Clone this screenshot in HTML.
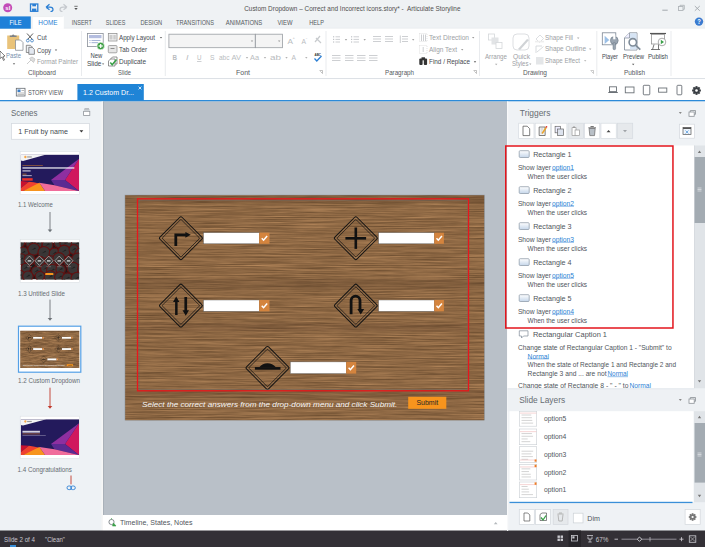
<!DOCTYPE html>
<html><head><meta charset="utf-8"><style>
html,body{margin:0;padding:0;width:705px;height:547px;overflow:hidden;background:#fff}
svg{display:block}
text{font-family:"Liberation Sans",sans-serif;white-space:pre}
</style></head><body>
<svg width="705" height="547" viewBox="0 0 705 547">
<rect x="0" y="0" width="705" height="29" fill="#eff2f4" />
<line x1="0" y1="28.4" x2="705" y2="28.4" stroke="#e0e4e7" stroke-width="0.8" />
<rect x="0" y="28.5" width="705" height="50" fill="#ffffff" />
<line x1="0" y1="78.6" x2="705" y2="78.6" stroke="#dde1e6" stroke-width="1.1" />
<rect x="0" y="79.2" width="705" height="21" fill="#ffffff" />
<rect x="0" y="100" width="705" height="1.6" fill="#2b8ad8" />
<rect x="0" y="101.5" width="103" height="430" fill="#eef2f5" />
<rect x="101.5" y="101.5" width="1.5" height="430" fill="#f6f6f6" />
<rect x="103" y="101.5" width="404" height="414" fill="#b9c0c8" />
<rect x="103" y="101.5" width="1" height="414" fill="#a9b1b9" />
<rect x="103" y="515" width="404" height="16" fill="#ffffff" />
<rect x="507" y="101.5" width="198" height="430" fill="#eff2f5" />
<rect x="0" y="530.5" width="705" height="16.5" fill="#333036" />
<circle cx="7.7" cy="7.7" r="4.5" fill="#c24cb8"/>
<text x="5.3" y="9.7" font-size="5" fill="#ffffff" textLength="5.0" lengthAdjust="spacingAndGlyphs" font-weight="bold">sl</text>
<rect x="30.5" y="4" width="7.3" height="7.3" fill="none" stroke="#2b7fd4" stroke-width="1.3"/>
<rect x="32.3" y="4" width="3.7" height="2.3" fill="#2b7fd4" />
<rect x="32" y="8.6" width="4.3" height="2.7" fill="#2b7fd4" />
<path d="M46 7.2 L49.5 4.2 M46 7.2 L49.5 9.8 M46.5 7.2 H50 Q53 7.2 53 9.5 Q53 11.5 50.5 11.5" fill="none" stroke="#2b7fd4" stroke-width="1.2"/>
<path d="M67 7.2 L63.5 4.2 M67 7.2 L63.5 9.8 M66.5 7.2 H63 Q60 7.2 60 9.5 Q60 11.5 62.5 11.5" fill="none" stroke="#c5c9ce" stroke-width="1.2"/>
<line x1="74.3" y1="6.3" x2="77.7" y2="6.3" stroke="#555" stroke-width="0.8" />
<path d="M74.3 8 L77.7 8 L76 10 Z" fill="#555"/>
<text x="244.2" y="10.6" font-size="7.2" fill="#505050" textLength="216.3" lengthAdjust="spacingAndGlyphs" >Custom Dropdown – Correct and Incorrect icons.story* -  Articulate Storyline</text>
<line x1="662.3" y1="10.2" x2="667.7" y2="10.2" stroke="#9aa0a5" stroke-width="0.9" />
<rect x="678.5" y="6.5" width="4.5" height="4" fill="none" stroke="#b0b5ba" stroke-width="0.9"/>
<path d="M680 6.5 V5.3 H684.3 V9.3 H683" fill="none" stroke="#b0b5ba" stroke-width="0.9"/>
<path d="M694.8 6 L699.8 10.8 M699.8 6 L694.8 10.8" stroke="#a3a8ad" stroke-width="0.9"/>
<circle cx="699" cy="21.6" r="4.2" fill="#3a7bd0"/>
<text x="697.2" y="24.1" font-size="6.5" fill="#ffffff" textLength="3.6" lengthAdjust="spacingAndGlyphs" font-weight="bold">?</text>
<rect x="0" y="16.4" width="30.8" height="12.3" fill="#1f80d8" />
<text x="9.5" y="24.9" font-size="6.3" fill="#ffffff" textLength="12.0" lengthAdjust="spacingAndGlyphs" >FILE</text>
<rect x="32.8" y="16.4" width="31" height="12.5" fill="#ffffff" />
<line x1="32.8" y1="16.6" x2="62.8" y2="16.6" stroke="#e3e6ea" stroke-width="0.6" />
<text x="38.3" y="24.9" font-size="6.3" fill="#2b7fd4" textLength="19.2" lengthAdjust="spacingAndGlyphs" >HOME</text>
<text x="71.7" y="25.0" font-size="6.3" fill="#555a60" textLength="20.2" lengthAdjust="spacingAndGlyphs" >INSERT</text>
<text x="105.8" y="25.0" font-size="6.3" fill="#555a60" textLength="19.5" lengthAdjust="spacingAndGlyphs" >SLIDES</text>
<text x="140.4" y="25.0" font-size="6.3" fill="#555a60" textLength="21.8" lengthAdjust="spacingAndGlyphs" >DESIGN</text>
<text x="176.1" y="25.0" font-size="6.3" fill="#555a60" textLength="37.8" lengthAdjust="spacingAndGlyphs" >TRANSITIONS</text>
<text x="225.8" y="25.0" font-size="6.3" fill="#555a60" textLength="36.5" lengthAdjust="spacingAndGlyphs" >ANIMATIONS</text>
<text x="277.4" y="25.0" font-size="6.3" fill="#555a60" textLength="15.1" lengthAdjust="spacingAndGlyphs" >VIEW</text>
<text x="309.2" y="25.0" font-size="6.3" fill="#555a60" textLength="14.7" lengthAdjust="spacingAndGlyphs" >HELP</text>
<line x1="81.5" y1="31" x2="81.5" y2="76" stroke="#e3e6ea" stroke-width="0.8" />
<line x1="165.3" y1="31" x2="165.3" y2="76" stroke="#e3e6ea" stroke-width="0.8" />
<line x1="326" y1="31" x2="326" y2="76" stroke="#e3e6ea" stroke-width="0.8" />
<line x1="479.5" y1="31" x2="479.5" y2="76" stroke="#e3e6ea" stroke-width="0.8" />
<line x1="596.8" y1="31" x2="596.8" y2="76" stroke="#e3e6ea" stroke-width="0.8" />
<line x1="671" y1="31" x2="671" y2="76" stroke="#e3e6ea" stroke-width="0.8" />
<rect x="7.2" y="35.5" width="12" height="13.5" fill="#e9c37a" />
<path d="M9.8 37 V35.6 H11.8 Q13.2 33.2 14.6 35.6 H16.6 V37 Z" fill="#7d8288"/>
<path d="M15.5 40 H20.5 L23 42.5 V50.3 H15.5 Z" fill="#fff" stroke="#8a8f95" stroke-width="0.8"/>
<text x="6" y="58.4" font-size="7.2" fill="#7590ad" textLength="15.0" lengthAdjust="spacingAndGlyphs" >Paste</text>
<path d="M12.8 63.2 L15.2 63.2 L14 64.7 Z" fill="#666"/>
<path d="M0 51 L5 56 L3 56.5 L4.5 60 L3.5 60.5 L2 57 L0 58.5 Z" fill="#fff" stroke="#333" stroke-width="0.6"/>
<path d="M27 33.5 L32.5 39.5 M33 33.5 L27.5 39.5" stroke="#333" stroke-width="0.8"/>
<circle cx="27.8" cy="40.6" r="1.4" fill="none" stroke="#3b7fc4" stroke-width="0.8"/><circle cx="32" cy="40.6" r="1.4" fill="none" stroke="#3b7fc4" stroke-width="0.8"/>
<text x="37" y="40.4" font-size="7.3" fill="#444a50" textLength="9.6" lengthAdjust="spacingAndGlyphs" >Cut</text>
<path d="M26.3 45.3 H30.5 L32 46.8 V52.5 H26.3 Z" fill="#eef1f5" stroke="#666" stroke-width="0.7"/>
<path d="M28.8 47.3 H32.3 L34.4 49.4 V54.3 H28.8 Z" fill="#e3e8f0" stroke="#666" stroke-width="0.7"/>
<text x="37" y="52.8" font-size="7.3" fill="#444a50" textLength="14.0" lengthAdjust="spacingAndGlyphs" >Copy</text>
<path d="M54.8 49.6 L57.2 49.6 L56 51 Z" fill="#666"/>
<path d="M27 64 L31 60 M29.5 58.5 L33.5 62.5 L35 59 L32 57 Z" stroke="#ccc" stroke-width="1" fill="#ddd"/>
<text x="37" y="64.2" font-size="7.3" fill="#9da1a5" textLength="41.0" lengthAdjust="spacingAndGlyphs" >Format Painter</text>
<text x="28" y="74.8" font-size="7.2" fill="#555a60" textLength="28.0" lengthAdjust="spacingAndGlyphs" >Clipboard</text>
<rect x="87.4" y="33.4" width="15.8" height="13.2" fill="#fff" stroke="#8a9099" stroke-width="0.8"/>
<rect x="89" y="35" width="12.5" height="3.2" fill="#b4bddf" />
<rect x="89.5" y="40" width="0.9" height="0.9" fill="#7f93c8" />
<line x1="91.5" y1="40.45" x2="100.5" y2="40.45" stroke="#8da0cc" stroke-width="0.8" />
<rect x="89.5" y="42.2" width="0.9" height="0.9" fill="#7f93c8" />
<line x1="91.5" y1="42.65" x2="98" y2="42.65" stroke="#8da0cc" stroke-width="0.8" />
<circle cx="100.7" cy="46" r="3.8" fill="#3f9f45" stroke="#fff" stroke-width="0.6"/>
<line x1="98.6" y1="46" x2="102.8" y2="46" stroke="#fff" stroke-width="1.2" />
<line x1="100.7" y1="43.9" x2="100.7" y2="48.1" stroke="#fff" stroke-width="1.2" />
<text x="90.5" y="58.4" font-size="7.3" fill="#444a50" textLength="11.8" lengthAdjust="spacingAndGlyphs" >New</text>
<text x="87" y="65.6" font-size="7.3" fill="#444a50" textLength="14.5" lengthAdjust="spacingAndGlyphs" >Slide</text>
<path d="M102 63.5 L104.2 63.5 L103.1 64.8 Z" fill="#555"/>
<rect x="108.3" y="33.5" width="8.7" height="7.5" fill="#f3f3f3" stroke="#888" stroke-width="0.7"/>
<rect x="109.5" y="35" width="3" height="4.5" fill="#ccc" />
<rect x="113.3" y="35" width="2.5" height="4.5" fill="#ccc" />
<text x="119" y="40.0" font-size="7.3" fill="#444a50" textLength="36.0" lengthAdjust="spacingAndGlyphs" >Apply Layout</text>
<path d="M159.8 37 L162.2 37 L161 38.4 Z" fill="#666"/>
<rect x="108.3" y="45.5" width="8.7" height="7.3" rx="1" fill="#e6e6e6" stroke="#888" stroke-width="0.7"/>
<line x1="110.5" y1="48.5" x2="114.5" y2="48.5" stroke="#777" stroke-width="0.8" />
<text x="119" y="52.1" font-size="7.3" fill="#444a50" textLength="28.0" lengthAdjust="spacingAndGlyphs" >Tab Order</text>
<path d="M110.5 59 L112.5 57 H117 V64 H110.5 Z" fill="#fff" stroke="#666" stroke-width="0.7"/>
<path d="M108.5 61 L110.5 59 H115 V66 H108.5 Z" fill="#fff" stroke="#666" stroke-width="0.7"/>
<path d="M110.3 62.5 L112.2 64.8 L116.5 59.5" fill="none" stroke="#3aa048" stroke-width="1.5"/>
<text x="119" y="64.3" font-size="7.3" fill="#444a50" textLength="27.0" lengthAdjust="spacingAndGlyphs" >Duplicate</text>
<text x="118" y="74.8" font-size="7.2" fill="#555a60" textLength="13.0" lengthAdjust="spacingAndGlyphs" >Slide</text>
<rect x="168.9" y="34.2" width="86.3" height="13.5" fill="#f4f4f4" stroke="#9a9ea3" stroke-width="0.8"/>
<rect x="255.5" y="34.2" width="27" height="13.5" fill="#f4f4f4" stroke="#9a9ea3" stroke-width="0.8"/>
<path d="M250.8 40.5 L253.2 40.5 L252 41.9 Z" fill="#999"/><path d="M278 40.5 L280.4 40.5 L279.2 41.9 Z" fill="#999"/>
<text x="287.5" y="44.2" font-size="7.5" fill="#b9bcc0" textLength="5.5" lengthAdjust="spacingAndGlyphs" >A</text>
<text x="292.5" y="38.7" font-size="4" fill="#b9bcc0" textLength="2.5" lengthAdjust="spacingAndGlyphs" >+</text>
<text x="301.5" y="43.8" font-size="6.5" fill="#b9bcc0" textLength="4.5" lengthAdjust="spacingAndGlyphs" >A</text>
<text x="305.5" y="38.7" font-size="4" fill="#b9bcc0" textLength="2.0" lengthAdjust="spacingAndGlyphs" >-</text>
<path d="M315 42 L320 36 M316 38 L321 43" stroke="#c8cbce" stroke-width="1.2"/>
<text x="172.5" y="60.3" font-size="7" fill="#b9bcc0" textLength="4.5" lengthAdjust="spacingAndGlyphs" font-weight="bold">B</text>
<text x="186" y="60.3" font-size="7" fill="#b9bcc0" textLength="2.5" lengthAdjust="spacingAndGlyphs" font-style="italic">I</text>
<text x="197" y="60.3" font-size="7" fill="#b9bcc0" textLength="4.5" lengthAdjust="spacingAndGlyphs" text-decoration="underline">U</text>
<text x="210" y="60.3" font-size="7" fill="#b9bcc0" textLength="4.5" lengthAdjust="spacingAndGlyphs" >S</text>
<text x="219" y="60.3" font-size="7" fill="#b9bcc0" textLength="10.5" lengthAdjust="spacingAndGlyphs" >abc</text>
<text x="231.5" y="60.3" font-size="7" fill="#b9bcc0" textLength="9.5" lengthAdjust="spacingAndGlyphs" >AV</text>
<text x="250" y="60.3" font-size="7" fill="#b9bcc0" textLength="9.0" lengthAdjust="spacingAndGlyphs" >Aa</text>
<text x="270" y="60.3" font-size="7" fill="#b9bcc0" textLength="11.0" lengthAdjust="spacingAndGlyphs" >ab</text>
<text x="291.5" y="60.3" font-size="7" fill="#b9bcc0" textLength="4.5" lengthAdjust="spacingAndGlyphs" >A</text>
<path d="M245.8 57.2 L248.2 57.2 L247 58.6 Z" fill="#999"/>
<path d="M263.8 57.2 L266.2 57.2 L265 58.6 Z" fill="#999"/>
<path d="M285.3 57.2 L287.7 57.2 L286.5 58.6 Z" fill="#999"/>
<path d="M305.1 57.2 L307.5 57.2 L306.3 58.6 Z" fill="#999"/>
<text x="314.5" y="56.3" font-size="3.6" fill="#333" textLength="6.5" lengthAdjust="spacingAndGlyphs" font-weight="bold">ABC</text>
<path d="M314.5 58.5 L316.8 61 L321.5 56" fill="none" stroke="#2b7fd4" stroke-width="1.3"/>
<text x="236" y="74.8" font-size="7.2" fill="#555a60" textLength="14.0" lengthAdjust="spacingAndGlyphs" >Font</text>
<path d="M319.5 70.5 H322.5 V73.5" fill="none" stroke="#999" stroke-width="0.6"/><path d="M320.3 71.3 L322.5 73.5" stroke="#999" stroke-width="0.6"/>
<rect x="333" y="36.2" width="1.2" height="1.2" fill="#c0c3c7" />
<line x1="335.5" y1="36.8" x2="340" y2="36.8" stroke="#c0c3c7" stroke-width="0.8" />
<rect x="333" y="38.800000000000004" width="1.2" height="1.2" fill="#c0c3c7" />
<line x1="335.5" y1="39.4" x2="340" y2="39.4" stroke="#c0c3c7" stroke-width="0.8" />
<rect x="333" y="41.400000000000006" width="1.2" height="1.2" fill="#c0c3c7" />
<line x1="335.5" y1="42.0" x2="340" y2="42.0" stroke="#c0c3c7" stroke-width="0.8" />
<path d="M344.8 39.2 L347.2 39.2 L346 40.6 Z" fill="#888"/>
<rect x="351" y="36.2" width="1.2" height="1.2" fill="#c0c3c7" />
<line x1="353.5" y1="36.8" x2="359" y2="36.8" stroke="#c0c3c7" stroke-width="0.8" />
<rect x="351" y="38.800000000000004" width="1.2" height="1.2" fill="#c0c3c7" />
<line x1="353.5" y1="39.4" x2="359" y2="39.4" stroke="#c0c3c7" stroke-width="0.8" />
<rect x="351" y="41.400000000000006" width="1.2" height="1.2" fill="#c0c3c7" />
<line x1="353.5" y1="42.0" x2="359" y2="42.0" stroke="#c0c3c7" stroke-width="0.8" />
<path d="M363.5 39.2 L365.9 39.2 L364.7 40.6 Z" fill="#888"/>
<line x1="373" y1="36.5" x2="381" y2="36.5" stroke="#c0c3c7" stroke-width="0.8" />
<line x1="373" y1="39.0" x2="381" y2="39.0" stroke="#c0c3c7" stroke-width="0.8" />
<line x1="373" y1="41.5" x2="381" y2="41.5" stroke="#c0c3c7" stroke-width="0.8" />
<line x1="385" y1="36.5" x2="393" y2="36.5" stroke="#c0c3c7" stroke-width="0.8" />
<line x1="385" y1="39.0" x2="393" y2="39.0" stroke="#c0c3c7" stroke-width="0.8" />
<line x1="385" y1="41.5" x2="393" y2="41.5" stroke="#c0c3c7" stroke-width="0.8" />
<line x1="402" y1="36.5" x2="408" y2="36.5" stroke="#c0c3c7" stroke-width="0.8" />
<line x1="402" y1="39.0" x2="408" y2="39.0" stroke="#c0c3c7" stroke-width="0.8" />
<line x1="402" y1="41.5" x2="408" y2="41.5" stroke="#c0c3c7" stroke-width="0.8" />
<line x1="400.3" y1="35.5" x2="400.3" y2="43" stroke="#c0c3c7" stroke-width="0.8" />
<path d="M412 39.2 L414.4 39.2 L413.2 40.6 Z" fill="#888"/>
<line x1="332" y1="55.5" x2="340.5" y2="55.5" stroke="#c0c3c7" stroke-width="0.8" />
<line x1="332" y1="58.0" x2="340.5" y2="58.0" stroke="#c0c3c7" stroke-width="0.8" />
<line x1="332" y1="60.5" x2="340.5" y2="60.5" stroke="#c0c3c7" stroke-width="0.8" />
<line x1="345" y1="55.5" x2="353.5" y2="55.5" stroke="#c0c3c7" stroke-width="0.8" />
<line x1="345" y1="58.0" x2="353.5" y2="58.0" stroke="#c0c3c7" stroke-width="0.8" />
<line x1="345" y1="60.5" x2="353.5" y2="60.5" stroke="#c0c3c7" stroke-width="0.8" />
<line x1="357" y1="55.5" x2="365.5" y2="55.5" stroke="#c0c3c7" stroke-width="0.8" />
<line x1="357" y1="58.0" x2="365.5" y2="58.0" stroke="#c0c3c7" stroke-width="0.8" />
<line x1="357" y1="60.5" x2="365.5" y2="60.5" stroke="#c0c3c7" stroke-width="0.8" />
<line x1="369" y1="55.5" x2="377.5" y2="55.5" stroke="#c0c3c7" stroke-width="0.8" />
<line x1="369" y1="58.0" x2="377.5" y2="58.0" stroke="#c0c3c7" stroke-width="0.8" />
<line x1="369" y1="60.5" x2="377.5" y2="60.5" stroke="#c0c3c7" stroke-width="0.8" />
<rect x="419.5" y="33.5" width="7.5" height="8" fill="none" stroke="#ccc" stroke-width="0.6" stroke-dasharray="1 1"/>
<line x1="421.5" y1="34.5" x2="421.5" y2="41" stroke="#c0c3c7" stroke-width="0.8" />
<line x1="423.5" y1="34.5" x2="423.5" y2="41" stroke="#c0c3c7" stroke-width="0.8" />
<line x1="425.5" y1="34.5" x2="425.5" y2="41" stroke="#c0c3c7" stroke-width="0.8" />
<text x="429" y="39.9" font-size="7.3" fill="#9da1a5" textLength="40.0" lengthAdjust="spacingAndGlyphs" >Text Direction</text>
<path d="M472 37 L474.4 37 L473.2 38.4 Z" fill="#999"/>
<rect x="419.5" y="45.5" width="7.5" height="8" fill="none" stroke="#ccc" stroke-width="0.6" stroke-dasharray="1 1"/>
<line x1="423.2" y1="47" x2="423.2" y2="52" stroke="#c0c3c7" stroke-width="0.8" />
<text x="429" y="51.9" font-size="7.3" fill="#9da1a5" textLength="28.0" lengthAdjust="spacingAndGlyphs" >Align Text</text>
<path d="M461 49 L463.4 49 L462.2 50.4 Z" fill="#999"/>
<rect x="419.3" y="58.5" width="3.3" height="6.5" rx="1" fill="#333"/><rect x="423.8" y="58.5" width="3.3" height="6.5" rx="1" fill="#333"/><rect x="421.5" y="57.3" width="3.5" height="3" fill="#333"/>
<text x="429" y="64.2" font-size="7.3" fill="#444a50" textLength="41.0" lengthAdjust="spacingAndGlyphs" >Find / Replace</text>
<path d="M473.8 61.3 L476.2 61.3 L475 62.7 Z" fill="#555"/>
<text x="385" y="74.8" font-size="7.2" fill="#555a60" textLength="29.0" lengthAdjust="spacingAndGlyphs" >Paragraph</text>
<path d="M473.5 70.5 H476.5 V73.5" fill="none" stroke="#999" stroke-width="0.6"/><path d="M474.3 71.3 L476.5 73.5" stroke="#999" stroke-width="0.6"/>
<rect x="488.5" y="34" width="6" height="6" fill="#fff" stroke="#d4d7da" stroke-width="0.8"/>
<rect x="491.5" y="37.5" width="7" height="7" fill="#e2e4e6" />
<rect x="496" y="42.5" width="6" height="6" fill="#fff" stroke="#d4d7da" stroke-width="0.8"/>
<text x="485" y="58.8" font-size="7.3" fill="#9da1a5" textLength="22.0" lengthAdjust="spacingAndGlyphs" >Arrange</text>
<path d="M495 63.8 L497.4 63.8 L496.2 65.2 Z" fill="#aaa"/>
<rect x="513" y="34" width="16" height="16" rx="4" fill="#fff" stroke="#d4d7da" stroke-width="0.8"/>
<path d="M518 49 L527 39 L529 40 L520 50 Z" fill="#d0d3d6"/>
<text x="513" y="58.8" font-size="7.3" fill="#9da1a5" textLength="17.0" lengthAdjust="spacingAndGlyphs" >Quick</text>
<text x="512" y="66.1" font-size="7.3" fill="#9da1a5" textLength="16.5" lengthAdjust="spacingAndGlyphs" >Styles</text>
<path d="M529.2 63.6 L531.4 63.6 L530.3 64.9 Z" fill="#aaa"/>
<path d="M536 39 L540 35 L543.5 38.5 L539.5 42.5 Z" fill="#fff" stroke="#d4d7da" stroke-width="0.8"/>
<rect x="535" y="40.8" width="9" height="1.6" fill="#eee" />
<text x="545" y="40.4" font-size="7.3" fill="#9da1a5" textLength="28.0" lengthAdjust="spacingAndGlyphs" >Shape Fill</text>
<path d="M577 37.5 L579.4 37.5 L578.2 38.9 Z" fill="#aaa"/>
<path d="M536 53 L536 46 L542 46 M537 52 L543.5 46.5" fill="none" stroke="#d4d7da" stroke-width="0.9"/>
<text x="545" y="51.4" font-size="7.3" fill="#9da1a5" textLength="41.0" lengthAdjust="spacingAndGlyphs" >Shape Outline</text>
<path d="M589 48.5 L591.4 48.5 L590.2 49.9 Z" fill="#aaa"/>
<rect x="536" y="57" width="7.5" height="7.5" fill="#e4e6e8" />
<text x="545" y="63.2" font-size="7.3" fill="#9da1a5" textLength="35.0" lengthAdjust="spacingAndGlyphs" >Shape Effect</text>
<path d="M584 60.2 L586.4 60.2 L585.2 61.6 Z" fill="#aaa"/>
<text x="523" y="74.8" font-size="7.2" fill="#555a60" textLength="24.0" lengthAdjust="spacingAndGlyphs" >Drawing</text>
<path d="M590.5 70.5 H593.5 V73.5" fill="none" stroke="#aaa" stroke-width="0.6"/><path d="M591.3 71.3 L593.5 73.5" stroke="#aaa" stroke-width="0.6"/>
<rect x="602.3" y="32.8" width="13.5" height="12" fill="#fff" stroke="#7c8794" stroke-width="0.8"/>
<path d="M604.6 35.8 L609.3 40 L604.6 44 Z" fill="#9cc0e6"/>
<circle cx="614.3" cy="40.5" r="3.9" fill="#9aa5b1" stroke="#6f7a86" stroke-width="0.6"/><rect x="613" y="42.5" width="2.6" height="7.2" rx="1.2" fill="#9aa5b1" stroke="#6f7a86" stroke-width="0.5"/>
<rect x="613.2" y="35.5" width="2.2" height="3.8" fill="#fff" />
<text x="602" y="58.8" font-size="7.3" fill="#444a50" textLength="16.0" lengthAdjust="spacingAndGlyphs" >Player</text>
<path d="M624.5 38 L629.5 32.8 H637 V50 H624.5 Z" fill="#fff" stroke="#7c8794" stroke-width="0.8"/>
<path d="M630 33.3 H636.5 V49.5 H630 Z" fill="#d6e4f4"/>
<path d="M624.5 38 H629.5 V32.8" fill="#eef" stroke="#7c8794" stroke-width="0.7"/>
<circle cx="632.8" cy="42.3" r="3.7" fill="#fff" stroke="#7f8c99" stroke-width="1.6"/>
<line x1="635.5" y1="45.2" x2="640.3" y2="49.6" stroke="#7f8c99" stroke-width="1.8" />
<text x="623" y="58.8" font-size="7.3" fill="#444a50" textLength="21.0" lengthAdjust="spacingAndGlyphs" >Preview</text>
<path d="M632 63.8 L634.4 63.8 L633.2 65.2 Z" fill="#555"/>
<line x1="650" y1="33.5" x2="666" y2="33.5" stroke="#555" stroke-width="1.2" />
<rect x="651.5" y="34.5" width="13" height="9.5" fill="#fff" stroke="#888" stroke-width="0.7"/>
<circle cx="662" cy="42" r="3.8" fill="#fff" stroke="#888" stroke-width="0.7"/><path d="M660.8 39.8 L664 42 L660.8 44.2 Z" fill="#3aa048"/>
<path d="M654 44.5 L652.5 49.5 M658.5 44.5 L658.5 49.5 M651 49.5 H660" stroke="#555" stroke-width="0.8"/>
<text x="648" y="58.8" font-size="7.3" fill="#444a50" textLength="20.0" lengthAdjust="spacingAndGlyphs" >Publish</text>
<text x="624" y="74.8" font-size="7.2" fill="#555a60" textLength="21.0" lengthAdjust="spacingAndGlyphs" >Publish</text>
<rect x="16.3" y="88.3" width="8.7" height="7.7" fill="#fff" stroke="#666c72" stroke-width="0.8"/>
<rect x="17.5" y="89.5" width="3" height="2.5" fill="#3d7fc6" />
<line x1="21.5" y1="90.5" x2="24" y2="90.5" stroke="#888" stroke-width="0.6" />
<line x1="17.5" y1="93" x2="24" y2="93" stroke="#888" stroke-width="0.6" />
<line x1="17.5" y1="94.6" x2="24" y2="94.6" stroke="#888" stroke-width="0.6" />
<text x="28" y="94.8" font-size="6.5" fill="#4d5257" textLength="35.0" lengthAdjust="spacingAndGlyphs" >STORY VIEW</text>
<rect x="77.4" y="84" width="66.4" height="16.5" fill="#1f84d6" />
<text x="83" y="95.1" font-size="7" fill="#ffffff" textLength="51.0" lengthAdjust="spacingAndGlyphs" >1.2 Custom Dr...</text>
<path d="M138.6 86.6 L141.4 89.4 M141.4 86.6 L138.6 89.4" stroke="#fff" stroke-width="0.8"/>
<rect x="609.5" y="86.8" width="7" height="4.8" fill="none" stroke="#6b7177" stroke-width="0.9"/>
<line x1="608.3" y1="92.5" x2="617.8" y2="92.5" stroke="#6b7177" stroke-width="1" />
<rect x="625.3" y="87" width="8.7" height="5.8" fill="none" stroke="#6b7177" stroke-width="0.9"/>
<rect x="643.3" y="85.3" width="6.5" height="9.5" rx="0.8" fill="none" stroke="#6b7177" stroke-width="0.9"/>
<rect x="658.6" y="88" width="8.2" height="4.2" fill="none" stroke="#6b7177" stroke-width="0.9"/>
<rect x="677" y="85.3" width="4.8" height="9.5" rx="0.8" fill="none" stroke="#6b7177" stroke-width="0.9"/>
<g transform="translate(696.5,90.5)"><circle r="3.2" fill="#3a3f44"/><rect x="-1" y="-4.4" width="2" height="2" fill="#3a3f44" transform="rotate(0)"/><rect x="-1" y="-4.4" width="2" height="2" fill="#3a3f44" transform="rotate(45)"/><rect x="-1" y="-4.4" width="2" height="2" fill="#3a3f44" transform="rotate(90)"/><rect x="-1" y="-4.4" width="2" height="2" fill="#3a3f44" transform="rotate(135)"/><rect x="-1" y="-4.4" width="2" height="2" fill="#3a3f44" transform="rotate(180)"/><rect x="-1" y="-4.4" width="2" height="2" fill="#3a3f44" transform="rotate(225)"/><rect x="-1" y="-4.4" width="2" height="2" fill="#3a3f44" transform="rotate(270)"/><rect x="-1" y="-4.4" width="2" height="2" fill="#3a3f44" transform="rotate(315)"/><circle r="1.3" fill="#fff"/></g>
<text x="11" y="115.7" font-size="9" fill="#646a70" textLength="26.5" lengthAdjust="spacingAndGlyphs" >Scenes</text>
<rect x="83.6" y="111.3" width="6.2" height="4.2" fill="#fff" stroke="#8f959b" stroke-width="0.8"/>
<path d="M84 109.9 H89.5 M84.5 108.7 H89" fill="none" stroke="#8f959b" stroke-width="0.7"/>
<rect x="11.5" y="123.5" width="78" height="15.8" fill="#fff" stroke="#d5dae0" stroke-width="0.8"/>
<text x="18.3" y="134.2" font-size="7.5" fill="#454a50" textLength="49.7" lengthAdjust="spacingAndGlyphs" >1 Fruit by name</text>
<path d="M79.5 130.2 L83.3 130.2 L81.4 132.5 Z" fill="#333"/>
<rect x="20.2" y="151.6" width="59.3" height="42.8" fill="#fff" stroke="#dde1e5" stroke-width="0.6"/>
<svg x="20.7" y="154.6" width="58.3" height="36.5" viewBox="0 0 100 62" preserveAspectRatio="none"><rect width="100" height="62" fill="#231a5c"/><path d="M0 0 H44 L4 11 L0 10 Z" fill="#f4f4f4"/><path d="M100 7 L76 43 L100 62 Z" fill="#d0185e"/><path d="M100 7 L52 43 L76 43 Z" fill="#8e2fa0"/><path d="M52 43 L76 43 L100 62 L58 52 Z" fill="#5b2a92"/><path d="M0 45 L14 46 L0 57 Z" fill="#c8102e"/><path d="M0 57 L14 46 L22 47 L36 50 L4 62 H0 Z" fill="#ef4130"/><path d="M4 62 L32 48 L42 62 Z" fill="#f7941d"/><path d="M32 48 L58 52 L100 62 H42 Z" fill="#f06c9b"/><rect x="3" y="18" width="35" height="0.9" fill="#f7941d" opacity="0.8"/><rect x="3" y="21.4" width="89" height="2.6" fill="#fff" opacity="0.75"/><rect x="3" y="26.6" width="14" height="2.2" fill="#fff" opacity="0.7"/><rect x="3" y="32.6" width="7" height="1" fill="#f7941d"/><rect x="3" y="34.8" width="16" height="1.8" fill="#fff" opacity="0.6"/><rect x="2.5" y="40" width="18" height="4.3" fill="#e8322d"/><circle cx="8" cy="4" r="2" fill="#f7941d" opacity="0.8"/><rect x="11" y="3" width="8" height="2" fill="#999"/></svg>
<text x="18" y="207.2" font-size="7" fill="#666c72" textLength="34.8" lengthAdjust="spacingAndGlyphs" >1.1 Welcome</text>
<line x1="50" y1="212" x2="50" y2="230" stroke="#6d7378" stroke-width="0.9" />
<path d="M47.7 229.5 L52.3 229.5 L50 232.3 Z" fill="#6d7378"/>
<rect x="20.2" y="239.5" width="59.4" height="42.8" fill="#fff" stroke="#dde1e5" stroke-width="0.6"/>
<svg x="20.7" y="242.6" width="58.4" height="36.9" viewBox="0 0 100 63" preserveAspectRatio="none"><rect width="100" height="63" fill="#1e1a1a"/><circle cx="-2.1" cy="0.4" r="8.9" fill="#3a3636" stroke="#621111" stroke-width="1.8"/><path d="M-6.1 2.4 l6 -5 l2 2 z" fill="#222"/><circle cx="16.8" cy="1.0" r="8.2" fill="#3a3636" stroke="#621111" stroke-width="1.8"/><path d="M12.8 3.0 l6 -5 l2 2 z" fill="#222"/><circle cx="28.1" cy="2.7" r="8.6" fill="#3a3636" stroke="#621111" stroke-width="1.8"/><path d="M24.1 4.7 l6 -5 l2 2 z" fill="#222"/><circle cx="45.9" cy="4.0" r="9.2" fill="#3a3636" stroke="#621111" stroke-width="1.8"/><path d="M41.9 6.0 l6 -5 l2 2 z" fill="#222"/><circle cx="66.7" cy="-0.2" r="9.6" fill="#3a3636" stroke="#621111" stroke-width="1.8"/><path d="M62.7 1.8 l6 -5 l2 2 z" fill="#222"/><circle cx="77.2" cy="1.1" r="10.2" fill="#3a3636" stroke="#621111" stroke-width="1.8"/><path d="M73.2 3.1 l6 -5 l2 2 z" fill="#222"/><circle cx="96.2" cy="1.9" r="9.7" fill="#3a3636" stroke="#621111" stroke-width="1.8"/><path d="M92.2 3.9 l6 -5 l2 2 z" fill="#222"/><circle cx="4.5" cy="17.1" r="9.5" fill="#3a3636" stroke="#621111" stroke-width="1.8"/><path d="M0.5 19.1 l6 -5 l2 2 z" fill="#222"/><circle cx="22.4" cy="11.2" r="10.2" fill="#3a3636" stroke="#621111" stroke-width="1.8"/><path d="M18.4 13.2 l6 -5 l2 2 z" fill="#222"/><circle cx="39.8" cy="16.8" r="10.2" fill="#3a3636" stroke="#621111" stroke-width="1.8"/><path d="M35.8 18.8 l6 -5 l2 2 z" fill="#222"/><circle cx="57.7" cy="18.4" r="9.0" fill="#3a3636" stroke="#621111" stroke-width="1.8"/><path d="M53.7 20.4 l6 -5 l2 2 z" fill="#222"/><circle cx="74.4" cy="14.6" r="10.3" fill="#3a3636" stroke="#621111" stroke-width="1.8"/><path d="M70.4 16.6 l6 -5 l2 2 z" fill="#222"/><circle cx="91.0" cy="11.8" r="8.3" fill="#3a3636" stroke="#621111" stroke-width="1.8"/><path d="M87.0 13.8 l6 -5 l2 2 z" fill="#222"/><circle cx="101.7" cy="18.7" r="9.1" fill="#3a3636" stroke="#621111" stroke-width="1.8"/><path d="M97.7 20.7 l6 -5 l2 2 z" fill="#222"/><circle cx="1.0" cy="28.4" r="9.3" fill="#3a3636" stroke="#621111" stroke-width="1.8"/><path d="M-3.0 30.4 l6 -5 l2 2 z" fill="#222"/><circle cx="15.1" cy="28.8" r="9.5" fill="#3a3636" stroke="#621111" stroke-width="1.8"/><path d="M11.1 30.8 l6 -5 l2 2 z" fill="#222"/><circle cx="32.7" cy="33.2" r="9.7" fill="#3a3636" stroke="#621111" stroke-width="1.8"/><path d="M28.7 35.2 l6 -5 l2 2 z" fill="#222"/><circle cx="51.4" cy="32.9" r="10.5" fill="#3a3636" stroke="#621111" stroke-width="1.8"/><path d="M47.4 34.9 l6 -5 l2 2 z" fill="#222"/><circle cx="65.4" cy="27.3" r="10.2" fill="#3a3636" stroke="#621111" stroke-width="1.8"/><path d="M61.4 29.3 l6 -5 l2 2 z" fill="#222"/><circle cx="83.7" cy="33.2" r="9.4" fill="#3a3636" stroke="#621111" stroke-width="1.8"/><path d="M79.7 35.2 l6 -5 l2 2 z" fill="#222"/><circle cx="97.7" cy="27.7" r="10.1" fill="#3a3636" stroke="#621111" stroke-width="1.8"/><path d="M93.7 29.7 l6 -5 l2 2 z" fill="#222"/><circle cx="8.6" cy="43.3" r="8.2" fill="#3a3636" stroke="#621111" stroke-width="1.8"/><path d="M4.6 45.3 l6 -5 l2 2 z" fill="#222"/><circle cx="26.8" cy="48.9" r="8.2" fill="#3a3636" stroke="#621111" stroke-width="1.8"/><path d="M22.8 50.9 l6 -5 l2 2 z" fill="#222"/><circle cx="42.4" cy="44.3" r="8.4" fill="#3a3636" stroke="#621111" stroke-width="1.8"/><path d="M38.4 46.3 l6 -5 l2 2 z" fill="#222"/><circle cx="54.4" cy="47.2" r="10.2" fill="#3a3636" stroke="#621111" stroke-width="1.8"/><path d="M50.4 49.2 l6 -5 l2 2 z" fill="#222"/><circle cx="68.4" cy="45.9" r="8.1" fill="#3a3636" stroke="#621111" stroke-width="1.8"/><path d="M64.4 47.9 l6 -5 l2 2 z" fill="#222"/><circle cx="89.7" cy="43.6" r="10.2" fill="#3a3636" stroke="#621111" stroke-width="1.8"/><path d="M85.7 45.6 l6 -5 l2 2 z" fill="#222"/><circle cx="107.8" cy="45.0" r="10.5" fill="#3a3636" stroke="#621111" stroke-width="1.8"/><path d="M103.8 47.0 l6 -5 l2 2 z" fill="#222"/><circle cx="-1.5" cy="56.6" r="9.5" fill="#3a3636" stroke="#621111" stroke-width="1.8"/><path d="M-5.5 58.6 l6 -5 l2 2 z" fill="#222"/><circle cx="12.3" cy="57.6" r="9.0" fill="#3a3636" stroke="#621111" stroke-width="1.8"/><path d="M8.3 59.6 l6 -5 l2 2 z" fill="#222"/><circle cx="32.9" cy="57.2" r="8.1" fill="#3a3636" stroke="#621111" stroke-width="1.8"/><path d="M28.9 59.2 l6 -5 l2 2 z" fill="#222"/><circle cx="50.9" cy="58.5" r="10.4" fill="#3a3636" stroke="#621111" stroke-width="1.8"/><path d="M46.9 60.5 l6 -5 l2 2 z" fill="#222"/><circle cx="67.2" cy="59.0" r="9.2" fill="#3a3636" stroke="#621111" stroke-width="1.8"/><path d="M63.2 61.0 l6 -5 l2 2 z" fill="#222"/><circle cx="80.2" cy="61.2" r="9.5" fill="#3a3636" stroke="#621111" stroke-width="1.8"/><path d="M76.2 63.2 l6 -5 l2 2 z" fill="#222"/><circle cx="96.5" cy="61.0" r="10.4" fill="#3a3636" stroke="#621111" stroke-width="1.8"/><path d="M92.5 63.0 l6 -5 l2 2 z" fill="#222"/><path d="M15 23 L22.5 31 L15 39 L7.5 31 Z" fill="#3a3535" stroke="#e8e8e8" stroke-width="0.9"/><rect x="12" y="30" width="6" height="2.5" fill="#ccc"/><rect x="11" y="41" width="8" height="0.8" fill="#999"/><path d="M32 23 L39.5 31 L32 39 L24.5 31 Z" fill="#3a3535" stroke="#e8e8e8" stroke-width="0.9"/><rect x="29" y="30" width="6" height="2.5" fill="#ccc"/><rect x="28" y="41" width="8" height="0.8" fill="#999"/><path d="M48 23 L55.5 31 L48 39 L40.5 31 Z" fill="#3a3535" stroke="#e8e8e8" stroke-width="0.9"/><rect x="45" y="30" width="6" height="2.5" fill="#ccc"/><rect x="44" y="41" width="8" height="0.8" fill="#999"/><path d="M66 23 L73.5 31 L66 39 L58.5 31 Z" fill="#3a3535" stroke="#e8e8e8" stroke-width="0.9"/><rect x="63" y="30" width="6" height="2.5" fill="#ccc"/><rect x="62" y="41" width="8" height="0.8" fill="#999"/><path d="M82 23 L89.5 31 L82 39 L74.5 31 Z" fill="#3a3535" stroke="#e8e8e8" stroke-width="0.9"/><rect x="79" y="30" width="6" height="2.5" fill="#ccc"/><rect x="78" y="41" width="8" height="0.8" fill="#999"/><rect x="42" y="52" width="14" height="3.5" rx="1" fill="#f7941d"/></svg>
<text x="18" y="295.5" font-size="7" fill="#666c72" textLength="47.0" lengthAdjust="spacingAndGlyphs" >1.3 Untitled Slide</text>
<line x1="50" y1="299.6" x2="50" y2="318.5" stroke="#6d7378" stroke-width="0.9" />
<path d="M47.7 318 L52.3 318 L50 320.8 Z" fill="#6d7378"/>
<rect x="18.5" y="326.2" width="62.3" height="46" fill="#fff" stroke="#54a0e6" stroke-width="1.2"/>
<svg x="20.2" y="330.7" width="59.1" height="37.4" viewBox="0 0 359 225" preserveAspectRatio="none"><use href="#woodslide"/></svg>
<text x="18" y="383.2" font-size="7" fill="#666c72" textLength="62.0" lengthAdjust="spacingAndGlyphs" >1.2 Custom Dropdown</text>
<line x1="50" y1="387.7" x2="50" y2="406.5" stroke="#c0392b" stroke-width="0.9" />
<path d="M47.7 406 L52.3 406 L50 408.8 Z" fill="#c0392b"/>
<rect x="20.2" y="416.2" width="59.3" height="42.2" fill="#fff" stroke="#dde1e5" stroke-width="0.6"/>
<svg x="20.7" y="419.2" width="58.3" height="35.900000000000006" viewBox="0 0 100 62" preserveAspectRatio="none"><rect width="100" height="62" fill="#231a5c"/><path d="M0 0 H44 L4 11 L0 10 Z" fill="#f4f4f4"/><path d="M100 7 L76 43 L100 62 Z" fill="#d0185e"/><path d="M100 7 L52 43 L76 43 Z" fill="#8e2fa0"/><path d="M52 43 L76 43 L100 62 L58 52 Z" fill="#5b2a92"/><path d="M0 45 L14 46 L0 57 Z" fill="#c8102e"/><path d="M0 57 L14 46 L22 47 L36 50 L4 62 H0 Z" fill="#ef4130"/><path d="M4 62 L32 48 L42 62 Z" fill="#f7941d"/><path d="M32 48 L58 52 L100 62 H42 Z" fill="#f06c9b"/><rect x="3" y="20" width="30" height="3.2" fill="#fff" opacity="0.8"/><rect x="3" y="25" width="30" height="0.9" fill="#f7941d"/><rect x="3" y="28" width="40" height="0.9" fill="#fff" opacity="0.55"/><circle cx="8" cy="4" r="2" fill="#f7941d" opacity="0.8"/><rect x="11" y="3" width="8" height="2" fill="#999"/></svg>
<text x="17.6" y="471.5" font-size="7" fill="#666c72" textLength="54.4" lengthAdjust="spacingAndGlyphs" >1.4 Congratulations</text>
<line x1="71" y1="475.5" x2="71" y2="484.3" stroke="#c0392b" stroke-width="0.9" />
<rect x="67" y="486" width="4.6" height="3.6" rx="1.8" fill="none" stroke="#2b7fd4" stroke-width="0.9"/><rect x="70.7" y="486" width="4.6" height="3.6" rx="1.8" fill="none" stroke="#2b7fd4" stroke-width="0.9"/>
<defs><g id="woodslide"><filter id="woodf" x="0" y="0" width="359" height="225" filterUnits="userSpaceOnUse" color-interpolation-filters="sRGB"><feTurbulence type="fractalNoise" baseFrequency="0.018 0.9" numOctaves="4" seed="7"/><feColorMatrix type="matrix" values="0.34 0 0 0 0.385  0.27 0 0 0 0.272  0.2 0 0 0 0.165  0 0 0 0 1"/></filter><rect width="359" height="225" fill="#7e5d3e" filter="url(#woodf)"/><rect y="0" width="359" height="8" fill="#4a3220" opacity="0.2"/><rect y="84" width="359" height="10" fill="#4a3220" opacity="0.18"/><rect y="128" width="359" height="8" fill="#4a3220" opacity="0.15"/><rect y="195" width="359" height="8" fill="#4a3220" opacity="0.15"/><g transform="translate(55.7,42.9) rotate(45)"><rect x="-15.556498373638808" y="-15.556498373638808" width="31.112996747277617" height="31.112996747277617" rx="1.5" fill="none" stroke="#141414" stroke-width="1"/><rect x="-13.356498373638807" y="-13.356498373638807" width="26.712996747277614" height="26.712996747277614" rx="1" fill="none" stroke="#141414" stroke-width="0.7"/></g><g transform="translate(230.6,42.9) rotate(45)"><rect x="-15.556498373638808" y="-15.556498373638808" width="31.112996747277617" height="31.112996747277617" rx="1.5" fill="none" stroke="#141414" stroke-width="1"/><rect x="-13.356498373638807" y="-13.356498373638807" width="26.712996747277614" height="26.712996747277614" rx="1" fill="none" stroke="#141414" stroke-width="0.7"/></g><g transform="translate(55.7,110.3) rotate(45)"><rect x="-15.556498373638808" y="-15.556498373638808" width="31.112996747277617" height="31.112996747277617" rx="1.5" fill="none" stroke="#141414" stroke-width="1"/><rect x="-13.356498373638807" y="-13.356498373638807" width="26.712996747277614" height="26.712996747277614" rx="1" fill="none" stroke="#141414" stroke-width="0.7"/></g><g transform="translate(230.6,110.3) rotate(45)"><rect x="-15.556498373638808" y="-15.556498373638808" width="31.112996747277617" height="31.112996747277617" rx="1.5" fill="none" stroke="#141414" stroke-width="1"/><rect x="-13.356498373638807" y="-13.356498373638807" width="26.712996747277614" height="26.712996747277614" rx="1" fill="none" stroke="#141414" stroke-width="0.7"/></g><g transform="translate(142.3,172.6) rotate(45)"><rect x="-15.556498373638808" y="-15.556498373638808" width="31.112996747277617" height="31.112996747277617" rx="1.5" fill="none" stroke="#141414" stroke-width="1"/><rect x="-13.356498373638807" y="-13.356498373638807" width="26.712996747277614" height="26.712996747277614" rx="1" fill="none" stroke="#141414" stroke-width="0.7"/></g><path transform="translate(55.7,42.9)" d="M-6.5 7.8 V-4.8 H4.5 V-6.3 L9.9 -3.35 L4.5 -0.4 V-1.9 H-3.7 V7.8 Z" fill="#111"/><g transform="translate(230.6,42.9)"><rect x="-10.4" y="-1.2" width="20.7" height="2.6" fill="#111"/><rect x="-1.3" y="-10.7" width="2.6" height="21.4" fill="#111"/></g><g transform="translate(55.7,110.3)"><path d="M-4.7 -9.2 L-1.5 -3.6 H-3.3 V9.3 H-5.8 V-3.6 H-7.9 Z" fill="#111"/><path d="M4.85 10.1 L1.6 4.6 H3.5 V-8.6 H6.2 V4.6 H8.1 Z" fill="#111"/></g><g transform="translate(230.6,110.3)"><path d="M-4.7 8.7 V-5 A4.45 4.45 0 0 1 4.2 -5 V3.6" fill="none" stroke="#111" stroke-width="2.8"/><path d="M1.5 3.4 H8.4 L4.95 8.9 Z" fill="#111"/></g><g transform="translate(142.3,172.6)"><rect x="-12.6" y="-0.8" width="25.6" height="2.6" fill="#111"/><path d="M-8.2 -0.6 Q-5 -4.6 0 -4.6 Q5 -4.6 8.3 -0.6 Z" fill="#111"/></g><rect x="78.3" y="37.4" width="55.7" height="11.100000000000001" fill="#ffffff" stroke="#555" stroke-width="0.4"/><rect x="134.0" y="37.4" width="10.300000000000011" height="11.100000000000001" fill="#d4843e"/><path d="M136.55 43.050000000000004 L138.35 44.95 L141.95000000000002 40.75" fill="none" stroke="#fff" stroke-width="1.5"/><rect x="253.4" y="37.4" width="55.70000000000002" height="11.100000000000001" fill="#ffffff" stroke="#555" stroke-width="0.4"/><rect x="309.1" y="37.4" width="9.599999999999966" height="11.100000000000001" fill="#d4843e"/><path d="M311.29999999999995 43.050000000000004 L313.09999999999997 44.95 L316.7 40.75" fill="none" stroke="#fff" stroke-width="1.5"/><rect x="78.3" y="104.7" width="55.7" height="11.299999999999997" fill="#ffffff" stroke="#555" stroke-width="0.4"/><rect x="134.0" y="104.7" width="10.300000000000011" height="11.299999999999997" fill="#d4843e"/><path d="M136.55 110.44999999999999 L138.35 112.35 L141.95000000000002 108.14999999999999" fill="none" stroke="#fff" stroke-width="1.5"/><rect x="253.4" y="104.7" width="55.70000000000002" height="11.299999999999997" fill="#ffffff" stroke="#555" stroke-width="0.4"/><rect x="309.1" y="104.7" width="9.599999999999966" height="11.299999999999997" fill="#d4843e"/><path d="M311.29999999999995 110.44999999999999 L313.09999999999997 112.35 L316.7 108.14999999999999" fill="none" stroke="#fff" stroke-width="1.5"/><rect x="165.1" y="166.6" width="55.900000000000006" height="11.700000000000017" fill="#ffffff" stroke="#555" stroke-width="0.4"/><rect x="221.0" y="166.6" width="10.0" height="11.700000000000017" fill="#d4843e"/><path d="M223.4 172.54999999999998 L225.2 174.45 L228.8 170.25" fill="none" stroke="#fff" stroke-width="1.5"/><text x="16.8" y="211.5" font-size="7.5" font-style="italic" fill="#f4f4f4" textLength="255.3" lengthAdjust="spacingAndGlyphs">Select the correct answers from the drop-down menu and click Submit.</text><rect x="283.0" y="201.5" width="38.1" height="12" fill="#f7941d"/><text x="291.2" y="210.1" font-size="7.4" fill="#262626" textLength="21.8" lengthAdjust="spacingAndGlyphs">Submit</text></g></defs>
<rect x="124.7" y="194.8" width="360" height="225.5" fill="#8a949e"/>
<svg x="125.2" y="195.3" width="359" height="225" viewBox="0 0 359 225" overflow="hidden"><use href="#woodslide"/><rect x="13.8" y="5" width="328.6" height="189.3" fill="none" stroke="#6e6a66" stroke-width="0.8" opacity="0.6"/><rect x="12.3" y="3.5" width="331" height="192" fill="none" stroke="#e8161b" stroke-width="1.3"/></svg>
<line x1="507.6" y1="101.5" x2="507.6" y2="531" stroke="#f8f9fa" stroke-width="1.2" />
<text x="519.8" y="116.2" font-size="9" fill="#676d73" textLength="30.6" lengthAdjust="spacingAndGlyphs" >Triggers</text>
<path d="M678.8 112 L681.8 112 L680.3 114 Z" fill="#888"/>
<rect x="689" y="112" width="5.2" height="4.3" fill="#fff" stroke="#8a9096" stroke-width="0.8"/><path d="M690.3 112 V110.5 H695.5 V114.3 H694.2" fill="none" stroke="#8a9096" stroke-width="0.8"/>
<rect x="518.70" y="123.2" width="15.3" height="15.2" fill="#ffffff" stroke="#d6dbe0" stroke-width="0.7"/>
<rect x="535.15" y="123.2" width="15.3" height="15.2" fill="#ffffff" stroke="#d6dbe0" stroke-width="0.7"/>
<rect x="551.60" y="123.2" width="15.3" height="15.2" fill="#ffffff" stroke="#d6dbe0" stroke-width="0.7"/>
<rect x="568.05" y="123.2" width="15.3" height="15.2" fill="#e6e9ec" stroke="#d6dbe0" stroke-width="0.7"/>
<rect x="584.50" y="123.2" width="15.3" height="15.2" fill="#ffffff" stroke="#d6dbe0" stroke-width="0.7"/>
<rect x="600.95" y="123.2" width="15.3" height="15.2" fill="#ffffff" stroke="#d6dbe0" stroke-width="0.7"/>
<rect x="617.40" y="123.2" width="15.3" height="15.2" fill="#e6e9ec" stroke="#d6dbe0" stroke-width="0.7"/>
<path d="M523.0 126.2 H527.2 L529.7 128.7 V135.6 H523.0 Z" fill="#fff" stroke="#555" stroke-width="0.75"/>
<path d="M539.1500000000001 127 H545.1500000000001 V135.5 H539.1500000000001 Z" fill="#f4f4f4" stroke="#555" stroke-width="0.75"/><path d="M540.6500000000001 129 H543.1500000000001 M540.6500000000001 131 H542.6500000000001 M540.6500000000001 133 H542.1500000000001" stroke="#999" stroke-width="0.5"/><path d="M542.1500000000001 133.5 L546.1500000000001 127.5" stroke="#e8a32c" stroke-width="1.5"/><circle cx="546.45" cy="126.8" r="0.9" fill="#d33"/>
<rect x="555.1" y="126.3" width="5.5" height="6.5" fill="#eef" stroke="#666" stroke-width="0.7"/><rect x="557.6" y="129" width="6" height="6.5" fill="#dde3ee" stroke="#666" stroke-width="0.7"/>
<path d="M572.0500000000001 127.5 H576.0500000000001 V135.5 H572.0500000000001 Z" fill="#fff" stroke="#999" stroke-width="0.7"/><rect x="575.0500000000001" y="130" width="4.5" height="5.5" fill="#fff" stroke="#999" stroke-width="0.7"/><rect x="573.0500000000001" y="126.5" width="2" height="1.5" fill="#999"/>
<path d="M588.3 127.8 H596.0 M590.5 126.5 H593.8" stroke="#666" stroke-width="0.9"/><path d="M589.1 128.5 L589.8 135.6 H594.5 L595.2 128.5 Z" fill="#b9c0c7" stroke="#666" stroke-width="0.7"/>
<path d="M606.5500000000001 132.2 L610.5500000000001 132.2 L608.5500000000001 130 Z" fill="#444"/>
<path d="M623.0000000000001 130 L627.0000000000001 130 L625.0000000000001 132.2 Z" fill="#a0a4a8"/>
<rect x="679.5" y="124.2" width="15" height="14" fill="#fff" stroke="#d3d8dd" stroke-width="0.7"/>
<rect x="683" y="127.5" width="8" height="7" fill="#eef4fb" stroke="#555" stroke-width="0.7"/><rect x="683" y="127.5" width="8" height="1.5" fill="#555"/><path d="M685.5 130.5 L688.5 133.5 M688.5 130.5 L685.5 133.5" stroke="#2b7fd4" stroke-width="0.6"/>
<rect x="507.5" y="145.5" width="186.5" height="243" fill="#ffffff" />
<rect x="694" y="145.5" width="11" height="243" fill="#e0e4e8" />
<rect x="694" y="145.5" width="0.6" height="243" fill="#d0d5da" />
<path d="M697.8 153 L701.2 153 L699.5 150.6 Z" fill="#777"/>
<rect x="694.6" y="157" width="10.4" height="66" fill="#a3abb2" />
<line x1="697.5" y1="188" x2="701.5" y2="188" stroke="#e5e8eb" stroke-width="0.7" />
<line x1="697.5" y1="189.5" x2="701.5" y2="189.5" stroke="#e5e8eb" stroke-width="0.7" />
<line x1="697.5" y1="191" x2="701.5" y2="191" stroke="#e5e8eb" stroke-width="0.7" />
<path d="M697.8 380.2 L701.2 380.2 L699.5 382.6 Z" fill="#777"/>
<defs><linearGradient id="rg" x1="0" y1="0" x2="0" y2="1"><stop offset="0" stop-color="#ffffff"/><stop offset="1" stop-color="#c5d6ea"/></linearGradient></defs>
<rect x="519.2" y="150.7" width="10" height="6.8" rx="1" fill="url(#rg)" stroke="#8794a2" stroke-width="0.7"/>
<text x="533.2" y="156.9" font-size="7.5" fill="#4f555b" textLength="38.3" lengthAdjust="spacingAndGlyphs" >Rectangle 1</text>
<text x="517.9" y="169.9" font-size="7.1" fill="#4f555b" textLength="33.1" lengthAdjust="spacingAndGlyphs" >Show layer</text>
<text x="552" y="169.9" font-size="7.1" fill="#2b7fd4" textLength="22.0" lengthAdjust="spacingAndGlyphs" >option1</text>
<line x1="552" y1="170.3" x2="574" y2="170.3" stroke="#2b7fd4" stroke-width="0.5" />
<text x="527.6" y="178.8" font-size="7.1" fill="#4f555b" textLength="59.5" lengthAdjust="spacingAndGlyphs" >When the user clicks</text>
<rect x="519.2" y="186.7" width="10" height="6.8" rx="1" fill="url(#rg)" stroke="#8794a2" stroke-width="0.7"/>
<text x="533.2" y="192.9" font-size="7.5" fill="#4f555b" textLength="38.3" lengthAdjust="spacingAndGlyphs" >Rectangle 2</text>
<text x="517.9" y="205.9" font-size="7.1" fill="#4f555b" textLength="33.1" lengthAdjust="spacingAndGlyphs" >Show layer</text>
<text x="552" y="205.9" font-size="7.1" fill="#2b7fd4" textLength="22.0" lengthAdjust="spacingAndGlyphs" >option2</text>
<line x1="552" y1="206.3" x2="574" y2="206.3" stroke="#2b7fd4" stroke-width="0.5" />
<text x="527.6" y="214.8" font-size="7.1" fill="#4f555b" textLength="59.5" lengthAdjust="spacingAndGlyphs" >When the user clicks</text>
<rect x="519.2" y="222.7" width="10" height="6.8" rx="1" fill="url(#rg)" stroke="#8794a2" stroke-width="0.7"/>
<text x="533.2" y="228.9" font-size="7.5" fill="#4f555b" textLength="38.3" lengthAdjust="spacingAndGlyphs" >Rectangle 3</text>
<text x="517.9" y="241.9" font-size="7.1" fill="#4f555b" textLength="33.1" lengthAdjust="spacingAndGlyphs" >Show layer</text>
<text x="552" y="241.9" font-size="7.1" fill="#2b7fd4" textLength="22.0" lengthAdjust="spacingAndGlyphs" >option3</text>
<line x1="552" y1="242.3" x2="574" y2="242.3" stroke="#2b7fd4" stroke-width="0.5" />
<text x="527.6" y="250.8" font-size="7.1" fill="#4f555b" textLength="59.5" lengthAdjust="spacingAndGlyphs" >When the user clicks</text>
<rect x="519.2" y="258.7" width="10" height="6.8" rx="1" fill="url(#rg)" stroke="#8794a2" stroke-width="0.7"/>
<text x="533.2" y="264.9" font-size="7.5" fill="#4f555b" textLength="38.3" lengthAdjust="spacingAndGlyphs" >Rectangle 4</text>
<text x="517.9" y="277.9" font-size="7.1" fill="#4f555b" textLength="33.1" lengthAdjust="spacingAndGlyphs" >Show layer</text>
<text x="552" y="277.9" font-size="7.1" fill="#2b7fd4" textLength="22.0" lengthAdjust="spacingAndGlyphs" >option5</text>
<line x1="552" y1="278.3" x2="574" y2="278.3" stroke="#2b7fd4" stroke-width="0.5" />
<text x="527.6" y="286.8" font-size="7.1" fill="#4f555b" textLength="59.5" lengthAdjust="spacingAndGlyphs" >When the user clicks</text>
<rect x="519.2" y="294.7" width="10" height="6.8" rx="1" fill="url(#rg)" stroke="#8794a2" stroke-width="0.7"/>
<text x="533.2" y="300.9" font-size="7.5" fill="#4f555b" textLength="38.3" lengthAdjust="spacingAndGlyphs" >Rectangle 5</text>
<text x="517.9" y="313.9" font-size="7.1" fill="#4f555b" textLength="33.1" lengthAdjust="spacingAndGlyphs" >Show layer</text>
<text x="552" y="313.9" font-size="7.1" fill="#2b7fd4" textLength="22.0" lengthAdjust="spacingAndGlyphs" >option4</text>
<line x1="552" y1="314.3" x2="574" y2="314.3" stroke="#2b7fd4" stroke-width="0.5" />
<text x="527.6" y="322.8" font-size="7.1" fill="#4f555b" textLength="59.5" lengthAdjust="spacingAndGlyphs" >When the user clicks</text>
<rect x="505.75" y="146" width="167.2" height="182" fill="none" stroke="#e3141c" stroke-width="1.5"/>
<path d="M519.3 330.8 H528 V336 H523.5 L521.5 338 V336 H519.3 Z" fill="#fff" stroke="#7e8a97" stroke-width="0.7"/>
<text x="532.9" y="337.1" font-size="7.5" fill="#4f555b" textLength="74.1" lengthAdjust="spacingAndGlyphs" >Rectangular Caption 1</text>
<text x="518" y="349.8" font-size="7.1" fill="#4f555b" textLength="153.6" lengthAdjust="spacingAndGlyphs" >Change state of Rectangular Caption 1 - &quot;Submit&quot; to</text>
<text x="527.6" y="358.5" font-size="7.1" fill="#2b7fd4" textLength="21.4" lengthAdjust="spacingAndGlyphs" >Normal</text>
<line x1="527.6" y1="358.9" x2="549" y2="358.9" stroke="#2b7fd4" stroke-width="0.5" />
<text x="527.6" y="367.3" font-size="7.1" fill="#4f555b" textLength="148.4" lengthAdjust="spacingAndGlyphs" >When the state of Rectangle 1 and Rectangle 2 and</text>
<text x="527.6" y="376.3" font-size="7.1" fill="#4f555b" textLength="78.9" lengthAdjust="spacingAndGlyphs" >Rectangle 3 and ... are not</text>
<text x="607.5" y="376.3" font-size="7.1" fill="#2b7fd4" textLength="20.5" lengthAdjust="spacingAndGlyphs" >Normal</text>
<line x1="607.5" y1="376.7" x2="628" y2="376.7" stroke="#2b7fd4" stroke-width="0.5" />
<text x="518" y="387.9" font-size="7.1" fill="#4f555b" textLength="110.5" lengthAdjust="spacingAndGlyphs" >Change state of Rectangle 8 - &quot; - &quot; to</text>
<text x="629.5" y="387.9" font-size="7.1" fill="#2b7fd4" textLength="21.5" lengthAdjust="spacingAndGlyphs" >Normal</text>
<rect x="507.5" y="388.5" width="197.5" height="22.7" fill="#eef1f4" />
<line x1="507.5" y1="388.8" x2="694" y2="388.8" stroke="#dde2e7" stroke-width="0.6" />
<text x="519.2" y="403.2" font-size="9" fill="#676d73" textLength="45.9" lengthAdjust="spacingAndGlyphs" >Slide Layers</text>
<path d="M678.8 399 L681.8 399 L680.3 401 Z" fill="#888"/>
<rect x="689" y="399" width="5.2" height="4.3" fill="#fff" stroke="#8a9096" stroke-width="0.8"/><path d="M690.3 399 V397.5 H695.5 V401.3 H694.2" fill="none" stroke="#8a9096" stroke-width="0.8"/>
<rect x="509.5" y="411.2" width="184" height="91" fill="#ffffff" />
<rect x="694" y="411.2" width="11" height="91" fill="#e0e4e8" />
<path d="M697.8 418.2 L701.2 418.2 L699.5 415.8 Z" fill="#777"/>
<rect x="694.6" y="423" width="10.4" height="59.6" fill="#a3abb2" />
<line x1="697.5" y1="453" x2="701.5" y2="453" stroke="#e5e8eb" stroke-width="0.7" />
<line x1="697.5" y1="454.5" x2="701.5" y2="454.5" stroke="#e5e8eb" stroke-width="0.7" />
<line x1="697.5" y1="456" x2="701.5" y2="456" stroke="#e5e8eb" stroke-width="0.7" />
<path d="M697.8 494.8 L701.2 494.8 L699.5 497.2 Z" fill="#777"/>
<rect x="519.3" y="411.4" width="17.4" height="14.8" fill="#fff" stroke="#c9ced3" stroke-width="0.6"/>
<line x1="521.5" y1="415.0" x2="531.2374101693382" y2="415.0" stroke="#b0b0b0" stroke-width="0.55" />
<line x1="521.5" y1="417.7" x2="531.9507219355644" y2="417.7" stroke="#b0b0b0" stroke-width="0.55" />
<line x1="521.5" y1="420.4" x2="532.2711613933942" y2="420.4" stroke="#b0b0b0" stroke-width="0.55" />
<line x1="521.5" y1="423.1" x2="533.1547017026624" y2="423.1" stroke="#b0b0b0" stroke-width="0.55" />
<line x1="520" y1="413.1" x2="536.5" y2="413.1" stroke="#f0b8b8" stroke-width="0.6" />
<text x="544.1" y="421.4" font-size="7" fill="#4f555b" textLength="22.2" lengthAdjust="spacingAndGlyphs" >option5</text>
<rect x="519.3" y="429.0" width="17.4" height="15.7" fill="#fff" stroke="#c9ced3" stroke-width="0.6"/>
<line x1="521.5" y1="433.54999999999995" x2="531.9393914484396" y2="433.54999999999995" stroke="#b0b0b0" stroke-width="0.55" />
<line x1="521.5" y1="436.24999999999994" x2="533.0339499799925" y2="436.24999999999994" stroke="#b0b0b0" stroke-width="0.55" />
<line x1="521.5" y1="438.94999999999993" x2="527.6740313697017" y2="438.94999999999993" stroke="#b0b0b0" stroke-width="0.55" />
<line x1="521.5" y1="441.65" x2="530.2937359262686" y2="441.65" stroke="#b0b0b0" stroke-width="0.55" />
<line x1="520" y1="431.65" x2="536.5" y2="431.65" stroke="#f0b8b8" stroke-width="0.6" />
<text x="544.1" y="439.1" font-size="7" fill="#4f555b" textLength="22.2" lengthAdjust="spacingAndGlyphs" >option4</text>
<rect x="519.3" y="446.7" width="17.4" height="15.7" fill="#fff" stroke="#c9ced3" stroke-width="0.6"/>
<line x1="521.5" y1="451.2" x2="533.1601403019898" y2="451.2" stroke="#b0b0b0" stroke-width="0.55" />
<line x1="521.5" y1="453.9" x2="531.3938473188216" y2="453.9" stroke="#b0b0b0" stroke-width="0.55" />
<line x1="521.5" y1="456.59999999999997" x2="532.9054029505037" y2="456.59999999999997" stroke="#b0b0b0" stroke-width="0.55" />
<line x1="521.5" y1="459.3" x2="528.1792357879189" y2="459.3" stroke="#b0b0b0" stroke-width="0.55" />
<line x1="520" y1="460.0" x2="536.5" y2="460.0" stroke="#f0b8b8" stroke-width="0.6" />
<rect x="534.6" y="459.5" width="1.9" height="2.2" fill="#f07c22" />
<text x="544.1" y="456.8" font-size="7" fill="#4f555b" textLength="22.2" lengthAdjust="spacingAndGlyphs" >option3</text>
<rect x="519.3" y="464.3" width="17.4" height="15.7" fill="#fff" stroke="#c9ced3" stroke-width="0.6"/>
<line x1="521.5" y1="468.84999999999997" x2="530.314414286693" y2="468.84999999999997" stroke="#b0b0b0" stroke-width="0.55" />
<line x1="521.5" y1="471.54999999999995" x2="528.979436995719" y2="471.54999999999995" stroke="#b0b0b0" stroke-width="0.55" />
<line x1="521.5" y1="474.24999999999994" x2="530.7625651554156" y2="474.24999999999994" stroke="#b0b0b0" stroke-width="0.55" />
<line x1="521.5" y1="476.95" x2="530.9436471275686" y2="476.95" stroke="#b0b0b0" stroke-width="0.55" />
<line x1="520" y1="466.95" x2="536.5" y2="466.95" stroke="#f0b8b8" stroke-width="0.6" />
<rect x="534.6" y="464.74999999999994" width="1.9" height="2.4" fill="#f07c22" />
<text x="544.1" y="474.5" font-size="7" fill="#4f555b" textLength="22.2" lengthAdjust="spacingAndGlyphs" >option2</text>
<rect x="519.3" y="482.0" width="17.4" height="15.7" fill="#fff" stroke="#c9ced3" stroke-width="0.6"/>
<line x1="521.5" y1="486.5" x2="527.5786851375334" y2="486.5" stroke="#b0b0b0" stroke-width="0.55" />
<line x1="521.5" y1="489.2" x2="528.8003788027831" y2="489.2" stroke="#b0b0b0" stroke-width="0.55" />
<line x1="521.5" y1="491.9" x2="529.1768941960667" y2="491.9" stroke="#b0b0b0" stroke-width="0.55" />
<line x1="521.5" y1="494.6" x2="532.9980722308513" y2="494.6" stroke="#b0b0b0" stroke-width="0.55" />
<line x1="520" y1="484.6" x2="536.5" y2="484.6" stroke="#f0b8b8" stroke-width="0.6" />
<rect x="534.6" y="482.4" width="1.9" height="2.4" fill="#f07c22" />
<text x="544.1" y="492.2" font-size="7" fill="#4f555b" textLength="22.2" lengthAdjust="spacingAndGlyphs" >option1</text>
<rect x="509.5" y="411.2" width="184" height="0.1" fill="#fff" />
<rect x="509.5" y="501.8" width="183" height="1.3" fill="#3a8fd8" />
<rect x="519.3" y="509.6" width="15.0" height="14.8" fill="#ffffff" stroke="#d3d8dd" stroke-width="0.7"/>
<rect x="535.6" y="509.6" width="14.799999999999955" height="14.8" fill="#ffffff" stroke="#d3d8dd" stroke-width="0.7"/>
<rect x="553.2" y="509.6" width="14.799999999999955" height="14.8" fill="#e6e9ec" stroke="#d3d8dd" stroke-width="0.7"/>
<path d="M524 513 H527.8 L529.8 515 V521 H524 Z" fill="#fff" stroke="#555" stroke-width="0.7"/>
<path d="M540 514.5 L542 513 H546.5 V520.5 H540 Z" fill="#fff" stroke="#555" stroke-width="0.7"/><path d="M541 517.5 L543 520 L546 515.5" fill="none" stroke="#3aa048" stroke-width="1.3"/>
<path d="M557.5 514 H563.5 M559 513 H562 M558 514.5 L558.8 521 H562.2 L563 514.5" fill="none" stroke="#aaa" stroke-width="0.8"/>
<rect x="573.3" y="513.2" width="9.7" height="9.7" fill="#fff" stroke="#ccd1d6" stroke-width="0.7"/>
<text x="587.3" y="520.7" font-size="7" fill="#4f555b" textLength="12.7" lengthAdjust="spacingAndGlyphs" >Dim</text>
<rect x="685.1" y="509.6" width="15.1" height="14.8" fill="#fff" stroke="#d3d8dd" stroke-width="0.7"/>
<g transform="translate(692.6,517)"><circle r="2.7" fill="#777"/><rect x="-0.9" y="-3.8" width="1.8" height="1.8" fill="#777" transform="rotate(0)"/><rect x="-0.9" y="-3.8" width="1.8" height="1.8" fill="#777" transform="rotate(45)"/><rect x="-0.9" y="-3.8" width="1.8" height="1.8" fill="#777" transform="rotate(90)"/><rect x="-0.9" y="-3.8" width="1.8" height="1.8" fill="#777" transform="rotate(135)"/><rect x="-0.9" y="-3.8" width="1.8" height="1.8" fill="#777" transform="rotate(180)"/><rect x="-0.9" y="-3.8" width="1.8" height="1.8" fill="#777" transform="rotate(225)"/><rect x="-0.9" y="-3.8" width="1.8" height="1.8" fill="#777" transform="rotate(270)"/><rect x="-0.9" y="-3.8" width="1.8" height="1.8" fill="#777" transform="rotate(315)"/><circle r="1.1" fill="#fff"/></g>
<circle cx="111.5" cy="522" r="2.6" fill="none" stroke="#6b7177" stroke-width="0.8"/><path d="M111.5 519.5 V518 M113.5 523 L116 526 L112.5 526 Z" stroke="#3aa048" fill="#3aa048" stroke-width="0.6"/>
<text x="120" y="524.8" font-size="7" fill="#4f555b" textLength="72.5" lengthAdjust="spacingAndGlyphs" >Timeline, States, Notes</text>
<path d="M493.8 524.3 L497.6 524.3 L495.7 522 Z" fill="#b5b9bd"/>
<text x="4" y="541.5" font-size="6.5" fill="#c8c5cc" textLength="31.0" lengthAdjust="spacingAndGlyphs" >Slide 2 of 4</text>
<text x="45" y="541.5" font-size="6.5" fill="#c8c5cc" textLength="20.0" lengthAdjust="spacingAndGlyphs" >&quot;Clean&quot;</text>
<rect x="10" y="545" width="6" height="2" fill="#3a8fd8" />
<rect x="557.5" y="535.5" width="2.4" height="2.4" fill="#c9c9cf" />
<rect x="560.6" y="535.5" width="2.4" height="2.4" fill="#c9c9cf" />
<rect x="557.5" y="538.6" width="2.4" height="2.4" fill="#c9c9cf" />
<rect x="560.6" y="538.6" width="2.4" height="2.4" fill="#c9c9cf" />
<rect x="568.6" y="530.5" width="12.4" height="16.5" fill="#27252a" />
<rect x="571.4" y="535.4" width="6" height="5.6" fill="none" stroke="#c9c9cf" stroke-width="0.8"/>
<rect x="572.3" y="536.3" width="2.2" height="2.2" fill="#c9c9cf" />
<path d="M587 535.5 H593 M588 536.5 V539 H592 V536.5 M590 539 V542 M588.3 542 H591.7" fill="none" stroke="#c9c9cf" stroke-width="0.8"/>
<text x="595.8" y="541.5" font-size="6.5" fill="#c8c5cc" textLength="12.7" lengthAdjust="spacingAndGlyphs" >67%</text>
<line x1="614.5" y1="539.2" x2="618" y2="539.2" stroke="#c8c5cc" stroke-width="0.9" />
<line x1="621.5" y1="539.2" x2="676.5" y2="539.2" stroke="#9b98a0" stroke-width="0.9" />
<path d="M639.5 537 L641.7 539.2 L639.5 541.4 L637.3 539.2 Z" fill="#333036" stroke="#d8d8dc" stroke-width="0.9"/>
<line x1="650" y1="537" x2="650" y2="541.5" stroke="#b9b6be" stroke-width="0.8" />
<line x1="679.5" y1="539.2" x2="683.5" y2="539.2" stroke="#c8c5cc" stroke-width="0.9" />
<line x1="681.5" y1="537.2" x2="681.5" y2="541.2" stroke="#c8c5cc" stroke-width="0.9" />
<rect x="689.3" y="535.8" width="6.5" height="6.5" fill="none" stroke="#c9c9cf" stroke-width="0.8"/><path d="M690 536.5 L695 541.5 M695 536.5 L690 541.5" stroke="#c9c9cf" stroke-width="0.6"/>
</svg></body></html>
